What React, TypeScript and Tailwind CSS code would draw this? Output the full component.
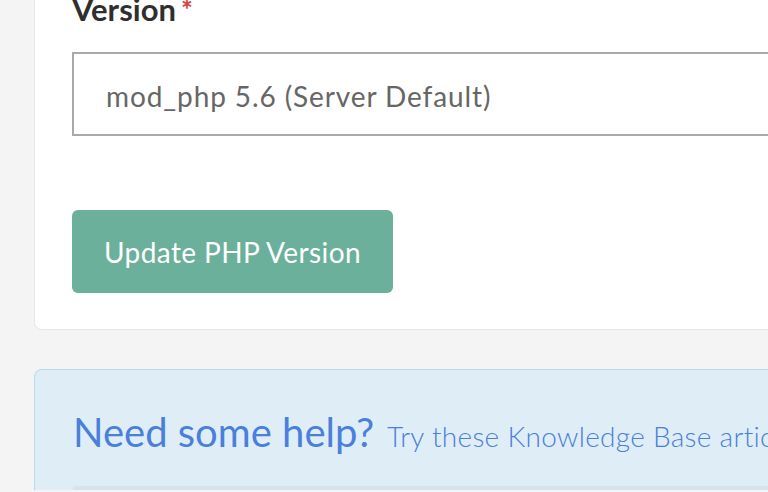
export default function App() {
  return (
    <div
      className="h-[492px] w-[768px] overflow-hidden bg-[#f4f4f4] pl-[34px]"
      style={{ fontFamily: 'Lato, "Open Sans", sans-serif' }}
    >
      {/* settings card */}
      <div className="w-[800px] rounded-b-[8px] border border-t-0 border-[#e6e6e6] bg-white pl-[37px] pb-[36px]">
        <label className="-mt-[6px] block text-[31px] font-bold leading-[30px] text-[#2f2f2f]">
          Version<span className="relative top-[1px] ml-[5px] align-top text-[28px] font-bold leading-none text-[#d0453f]">*</span>
        </label>
        <div className="mt-[28px] flex h-[84px] items-center border-2 border-[#a9a9a9] pl-[32px] pt-[3px] text-[28px] leading-none tracking-[0.9px] text-[#666666]">
          mod_php 5.6 (Server Default)
        </div>
        <button className="mt-[74px] flex h-[83px] w-[321px] items-center justify-center rounded-[6px] bg-[#6ab09a] text-[28px] leading-none tracking-[0.4px] text-white">
          Update PHP Version
        </button>
      </div>

      {/* help box */}
      <div className="mt-[39px] w-[800px] rounded-t-[8px] border border-b-0 border-[#b9dcec] bg-[#dfeef6] pl-[38px] pt-[42px]">
        <div className="flex items-baseline gap-[13px] whitespace-nowrap leading-none text-[#4a7fdc]">
          <span className="text-[40px]">Need some help?</span>
          <span className="text-[28px] font-light tracking-[0.3px]">Try these Knowledge Base articles</span>
        </div>
        <div className="mt-[34px] h-[4px] bg-[#d5e5ee]" />
      </div>
    </div>
  )
}
